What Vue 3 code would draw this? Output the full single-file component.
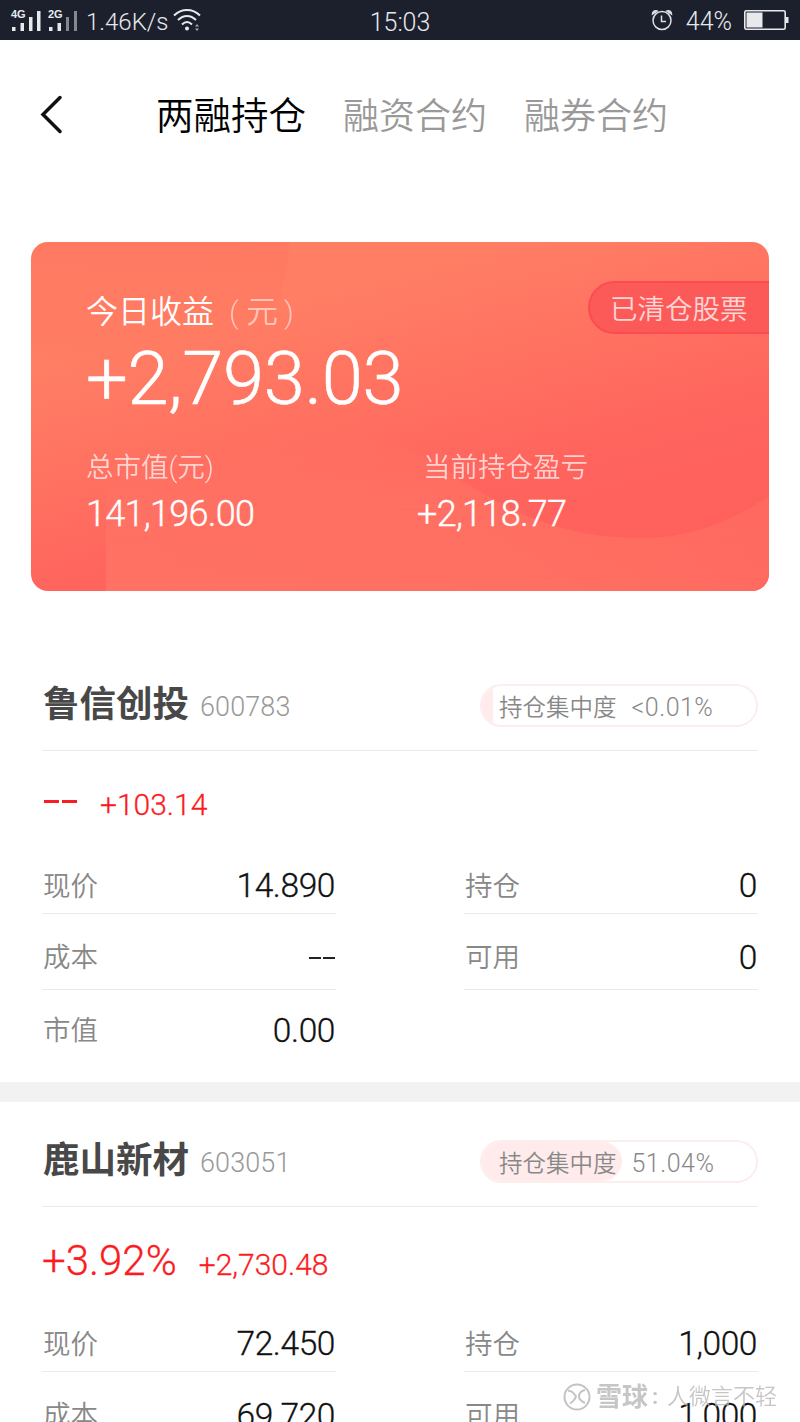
<template>
  <div class="page">
    <header class="status">
      <div class="status-left">
        <svg class="signals" width="70" height="30" viewBox="0 0 70 30">
          <g fill="#e8e9ec">
            <rect x="3" y="20" width="3.500" height="4" />
            <rect x="11.500" y="16" width="3.500" height="8" />
            <rect x="20" y="10" width="3.500" height="14" />
            <rect x="28" y="4" width="3.500" height="20" />
            <rect x="40" y="20" width="3.500" height="4" />
            <rect x="48.500" y="16" width="3.500" height="8" />
          </g>
          <g fill="#858890">
            <rect x="57" y="10" width="3" height="14" />
            <rect x="65" y="4" width="3" height="20" />
          </g>
          <text x="2" y="11" class="net">4G</text>
          <text x="39" y="11" class="net">2G</text>
        </svg>
        <span class="speed">1.46K/s</span>
        <svg class="wifi" width="30" height="24" viewBox="0 0 30 24" fill="none" stroke="#e8e9ec" stroke-width="2">
          <path d="M1 7.500C8.500 0 19.500 0 27 7.500" />
          <path d="M5 12C10.500 6.500 17.500 6.500 23 12" />
          <path d="M9 16.500C12.500 13 15.500 13 19 16.500" />
          <circle cx="14" cy="20.500" r="2" fill="#e8e9ec" stroke="none" />
          <path d="M22 18.500l2-2.500 2 2.500zM22 20.500l2 2.500 2-2.500z" fill="#a5a7ad" stroke="none" />
        </svg>
      </div>
      <span class="clock">15:03</span>
      <div class="status-right">
        <svg width="22" height="22" viewBox="0 0 22 22" fill="none" stroke="#dcdde0" stroke-width="1.500">
          <circle cx="11" cy="11.500" r="9" />
          <path d="M10.500 6.500v6h4.500" />
          <path d="M1.500 5C1.500 2.500 4 1 6 2zM20.500 5C20.500 2.500 18 1 16 2z" fill="#dcdde0" />
        </svg>
        <span class="percent">44%</span>
        <svg width="45" height="20" viewBox="0 0 45 20">
          <rect x=".8" y=".8" width="40.400" height="18.400" rx="1.500" fill="none" stroke="#e8e9ec" stroke-width="1.600" />
          <rect x="2.500" y="2.500" width="16" height="15" fill="#e8e9ec" />
          <rect x="42" y="7" width="2.500" height="6" fill="#e8e9ec" />
        </svg>
      </div>
    </header>

    <nav class="tabs">
      <svg class="back" width="24" height="40" viewBox="0 0 24 40" fill="none" stroke="#111" stroke-width="3.500" stroke-linecap="round">
        <path d="M20 3.500L3 20.500 20 37.500" />
      </svg>
      <span
        v-for="(tab, i) in tabs"
        :key="tab"
        class="tab"
        :class="{ 'tab--active': i === active }"
        @click="active = i"
      >{{ tab }}</span>
    </nav>

    <section class="card">
      <svg class="card-bg" width="738" height="349" viewBox="0 0 738 349">
        <defs>
          <linearGradient id="hill" x1="0" y1="0" x2="1" y2="0">
            <stop offset="0" stop-color="#ff7264" />
            <stop offset=".5" stop-color="#ff7163" />
            <stop offset="1" stop-color="#ff6b60" />
          </linearGradient>
          <linearGradient id="fade" x1="0" y1="0" x2="0" y2="1">
            <stop offset="0" stop-color="#fff" stop-opacity="0" />
            <stop offset=".45" stop-color="#fff" stop-opacity=".8" />
            <stop offset="1" stop-color="#fff" />
          </linearGradient>
          <mask id="hill-mask">
            <rect x="0" y="170" width="738" height="179" fill="url(#fade)" />
          </mask>
          <linearGradient id="spot" x1="0" y1="0" x2="0" y2="1">
            <stop offset="0" stop-color="#ff6e5a" stop-opacity=".35" />
            <stop offset="1" stop-color="#ff6e5a" stop-opacity="0" />
          </linearGradient>
        </defs>
        <path d="M0 0H258C257 70 215 135 130 140C70 143 25 125 0 100Z" fill="url(#spot)" />
        <path d="M75 349V250C110 200 190 180 258 182C340 187 390 210 425 235C480 270 530 296 610 296C670 296 710 272 738 254V349Z" fill="url(#hill)" mask="url(#hill-mask)" />
      </svg>
      <div class="card-main">
        <div class="today">今日收益<span class="unit"><span class="paren">(</span>元<span class="paren">)</span></span></div>
        <div class="profit">+2,793.03</div>
        <div class="totals">
          <div class="total">
            <div class="total-label">总市值(元)</div>
            <div class="total-value">141,196.00</div>
          </div>
          <div class="total">
            <div class="total-label total-label--shift">当前持仓盈亏</div>
            <div class="total-value">+2,118.77</div>
          </div>
        </div>
      </div>
      <div class="cleared">已清仓股票</div>
    </section>

    <section v-for="s in stocks" :key="s.code" class="stock">
      <div class="stock-head">
        <span class="name">{{ s.name }}</span>
        <span class="code">{{ s.code }}</span>
        <div class="focus">
          <div class="focus-fill" :class="{ 'focus-fill--round': s.fill > 10 }" :style="{ width: s.fill + '%' }"></div>
          <span class="focus-label">持仓集中度</span>
          <span class="focus-value">{{ s.focus }}</span>
        </div>
      </div>
      <div class="change" :class="{ 'change--empty': !s.rate }">
        <span v-if="s.rate" class="rate">{{ s.rate }}</span>
        <span v-else class="dashes dashes--red"><i></i><i></i></span>
        <span class="gain">{{ s.gain }}</span>
      </div>
      <div class="columns">
        <div v-for="(col, c) in s.columns" :key="c" class="column">
          <div v-for="row in col" :key="row[0]" class="row">
            <span class="row-label">{{ row[0] }}</span>
            <span v-if="row[1]" class="row-value">{{ row[1] }}</span>
            <span v-else class="dashes"><i></i><i></i></span>
          </div>
        </div>
      </div>
    </section>

    <div class="watermark">
      <svg width="28" height="28" viewBox="0 0 28 28" fill="none" stroke="#b5b5b5" stroke-width="2">
        <circle cx="14" cy="14" r="12.500" />
        <path d="M5 8c3-1 5 1 8 5.500c-1 3-3 5-6 7M22 7c-4 1-6 4-6 6.500s3 5 6 6.500" />
      </svg>
      <span class="brand">雪球</span><span class="colon">:</span><span class="author">人微言不轻</span>
    </div>
  </div>
</template>

<script setup>
import { ref } from 'vue';

const tabs = ['两融持仓', '融资合约', '融券合约'];
const active = ref(0);

// an empty value is shown as two dashes
const stocks = [
  {
    name: '鲁信创投',
    code: '600783',
    focus: '<0.01%',
    fill: 4,
    rate: '',
    gain: '+103.14',
    columns: [
      [['现价', '14.890'], ['成本', ''], ['市值', '0.00']],
      [['持仓', '0'], ['可用', '0']],
    ],
  },
  {
    name: '鹿山新材',
    code: '603051',
    focus: '51.04%',
    fill: 51.04,
    rate: '+3.92%',
    gain: '+2,730.48',
    columns: [
      [['现价', '72.450'], ['成本', '69.720']],
      [['持仓', '1,000'], ['可用', '1,000']],
    ],
  },
];
</script>

<style>
body {
  background: #fff;
  overflow: hidden;
}
</style>

<style scoped>
.page {
  position: relative;
  width: 800px;
  height: 1422px;
  overflow: hidden;
  background: #fff;
  font-family: Roboto, "Noto Sans CJK SC", sans-serif;
  font-weight: 350;
  white-space: nowrap;
}

.status {
  display: flex;
  justify-content: space-between;
  align-items: center;
  height: 40px;
  padding: 0 11px 0 9px;
  background: #1c202c;
  color: #e8e9ec;
  font-size: 24px;
}

.status-left {
  display: flex;
  align-items: center;
  width: 300px;
}

.net {
  fill: #e8e9ec;
  font: bold 11px "Liberation Sans", sans-serif;
}

.signals {
  margin-top: 3px;
}

.speed {
  margin: 3px 0 0 7px;
}

.wifi {
  margin-left: 4px;
}

.clock {
  margin: 4px 0 0 2px;
  font-size: 25px;
}

.status-right {
  display: flex;
  justify-content: flex-end;
  align-items: center;
  width: 300px;
}

.percent {
  margin: 2px 12px 0 13px;
  font-size: 25px;
}

.tabs {
  display: flex;
  align-items: center;
  height: 148px;
  padding-left: 40px;
}

.back {
  margin-right: 92px;
}

.tab {
  margin: -2px 37px 0 0;
  color: #999;
  font-size: 36px;
}

.tab--active {
  margin-top: -4px;
  color: #000;
  font-size: 37.500px;
}

.card {
  position: relative;
  display: flex;
  justify-content: space-between;
  width: 738px;
  height: 349px;
  margin: 54px 0 55px 31px;
  overflow: hidden;
  border-radius: 17px;
  background: linear-gradient(165deg, #ff7f65 5%, #ff7e64 24%, #ff635d 68%, #ff5e5b 100%);
  color: #fff;
}

.card-bg {
  position: absolute;
  inset: 0;
}

.card-main {
  position: relative;
  padding: 47px 0 0 55px;
}

.today {
  height: 46px;
  font-size: 32px;
  line-height: 46px;
}

.unit {
  margin-left: 15px;
  opacity: .55;
}

.paren {
  display: inline-block;
  width: 17px;
  font-size: 30px;
}

.paren:last-child {
  width: auto;
  margin-left: 6px;
}

.profit {
  height: 86px;
  font-size: 74px;
  letter-spacing: -.3px;
  line-height: 88px;
  -webkit-text-stroke: .6px currentColor;
}

.totals {
  display: flex;
  padding-top: 24px;
}

.total {
  width: 331px;
}

.total-label {
  height: 46px;
  font-size: 27.500px;
  line-height: 46px;
  opacity: .7;
}

.total-label--shift {
  padding-left: 6px;
}

.total-value {
  height: 48px;
  font-size: 36px;
  letter-spacing: -.7px;
  line-height: 46px;
  -webkit-text-stroke: .4px currentColor;
}

.cleared {
  position: absolute;
  top: 39px;
  right: -2px;
  box-sizing: border-box;
  width: 183px;
  height: 53px;
  padding: 2px 0 0 20px;
  border: 2px solid #fc4c52;
  border-radius: 27px 0 0 27px;
  background: #fc5a58;
  color: rgba(255, 255, 255, .75);
  font-size: 27.500px;
  line-height: 49px;
}

.stock {
  box-sizing: border-box;
  height: 456px;
  padding: 0 42px;
  border-bottom: 20px solid #f2f2f2;
}

.stock-head {
  display: flex;
  align-items: center;
  box-sizing: border-box;
  height: 105px;
  padding-top: 12px;
  border-bottom: 1px solid #ebebeb;
}

.name {
  margin: -5px 0 0 1px;
  color: #484848;
  font-size: 36.500px;
  font-weight: 700;
}

.code {
  margin: 6px auto 0 11px;
  color: #999;
  font-size: 27px;
  letter-spacing: .1px;
}

.focus {
  position: relative;
  display: flex;
  align-items: center;
  box-sizing: border-box;
  width: 278px;
  height: 43px;
  margin-top: 3px;
  padding-left: 17px;
  overflow: hidden;
  border: 2px solid #fdeeee;
  border-radius: 22px;
  color: #888;
  font-size: 23.500px;
}

.focus-fill {
  position: absolute;
  top: 0;
  bottom: 0;
  left: 0;
  background: #ffebeb;
}

.focus-fill--round {
  border-radius: 0 20px 20px 0;
}

.focus-label,
.focus-value {
  position: relative;
}

.focus-value {
  margin: 3px 0 0 15px;
  font-size: 25px;
  letter-spacing: .5px;
}

.change {
  display: flex;
  align-items: baseline;
  height: 108px;
  color: #fb1c22;
  line-height: 107px;
  -webkit-text-stroke: .3px currentColor;
}

.change--empty {
  height: 106px;
  line-height: 108px;
}

.rate {
  margin-right: 22px;
  font-size: 42px;
}

.gain {
  font-size: 30px;
}

.dashes {
  display: flex;
  gap: 2px;
  margin: 3px 1px 0 0;
}

.dashes i {
  width: 12px;
  height: 2px;
  background: #222;
}

.dashes--red {
  align-self: center;
  gap: 3px;
  margin: -5px 23px 0 2px;
}

.dashes--red i {
  width: 15px;
  height: 3px;
  background: #fb1c22;
}

.columns {
  display: flex;
  justify-content: space-between;
  align-items: flex-start;
}

.column {
  width: 294px;
}

.row {
  display: flex;
  justify-content: space-between;
  align-items: center;
  box-sizing: border-box;
  height: 76px;
  padding-top: 10px;
  border-bottom: 1px solid #ebebeb;
}

.row:first-child {
  height: 57px;
  padding-top: 0;
}

.row:nth-child(3) {
  border-bottom: 0;
  padding-top: 3px;
}

.row-label {
  margin: -3px 0 0 1px;
  color: #888;
  font-size: 27.500px;
}

.row-value {
  margin: 1px 1px 0 0;
  color: #111;
  font-size: 33.500px;
  letter-spacing: -.4px;
  -webkit-text-stroke: .3px currentColor;
}

.watermark {
  position: absolute;
  top: 1380px;
  left: 563px;
  display: flex;
  align-items: center;
  color: #b8b8b8;
  font-size: 22px;
  line-height: 34px;
  opacity: .8;
}

.brand {
  margin-left: 5px;
  font-size: 26px;
  font-weight: 700;
}

.colon {
  width: 15px;
  margin-left: 4px;
  font-weight: 700;
}
</style>
